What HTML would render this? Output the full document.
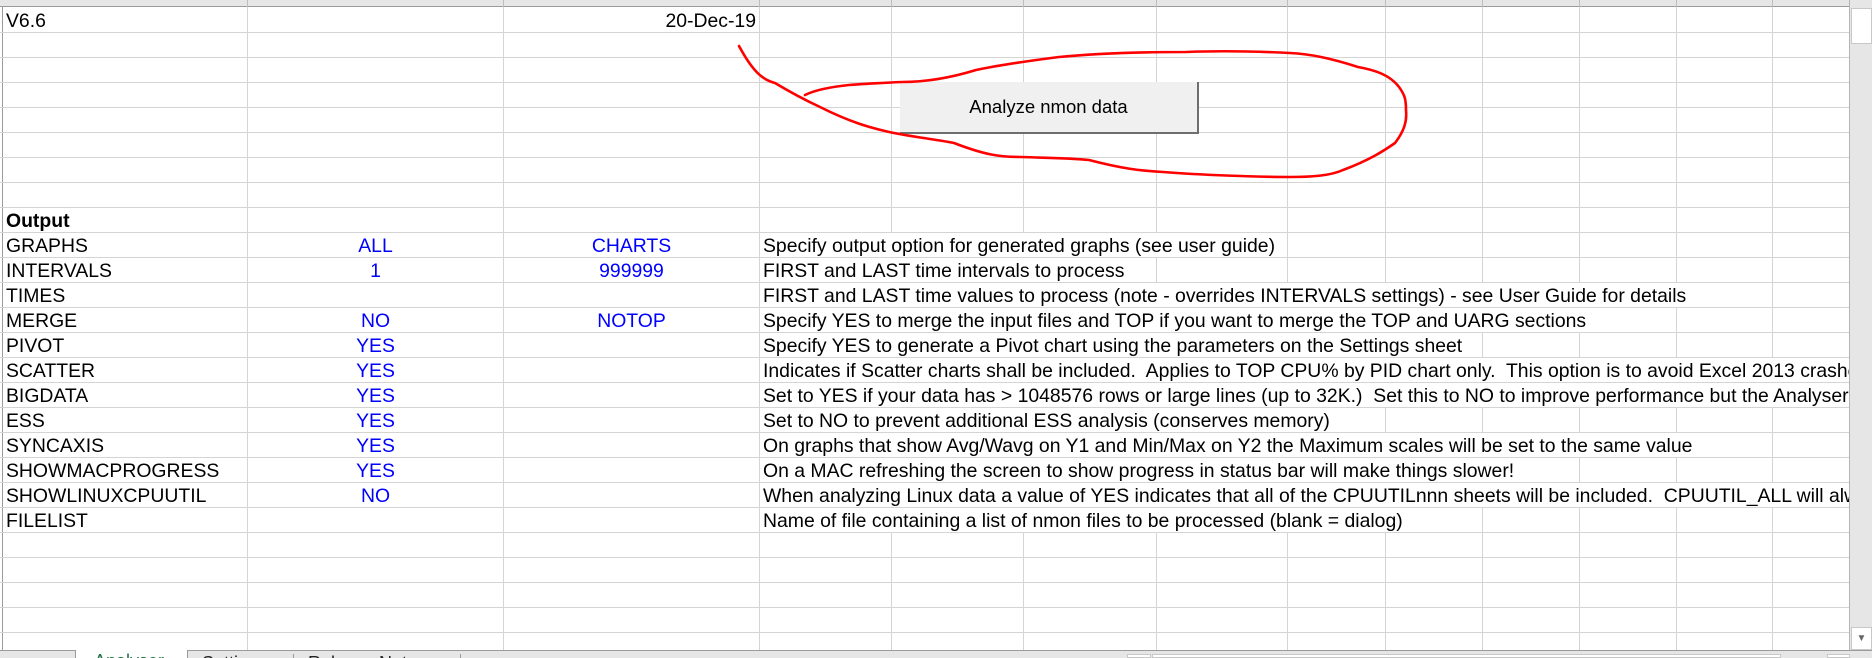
<!DOCTYPE html>
<html><head><meta charset="utf-8"><style>
*{margin:0;padding:0;box-sizing:border-box}
body{width:1872px;height:658px;overflow:hidden;background:#fff;position:relative;font-family:"Liberation Sans",Arial,sans-serif;font-size:19.4px;color:#000}
.hdr{position:absolute;left:0;top:0;width:1849px;height:7px;background:#e6e6e6;border-bottom:1px solid #9b9b9b}
.vl{position:absolute;width:1px;background:#d4d4d4;top:7px;height:643px}
.hl{position:absolute;height:1px;background:#d4d4d4;left:0;width:1849px}
.hs{position:absolute;top:0;width:1px;height:7px;background:#bdbdbd}
.t{position:absolute;height:24px;line-height:25px;padding-top:1px;white-space:nowrap}
.b{color:#0000ff;text-align:center}
.d{background:#fff;padding-right:4px}
.clip{position:absolute;left:0;top:0;width:1849px;height:650px;overflow:hidden}
</style></head><body>
<div class="clip">
<div class="hdr"></div>
<div class="vl" style="left:2px;background:#9b9b9b"></div>
<div class="vl" style="left:247px"></div><div class="vl" style="left:503px"></div><div class="vl" style="left:759px"></div><div class="vl" style="left:891px"></div><div class="vl" style="left:1023px"></div><div class="vl" style="left:1156px"></div><div class="vl" style="left:1287px"></div><div class="vl" style="left:1385px"></div><div class="vl" style="left:1482px"></div><div class="vl" style="left:1579px"></div><div class="vl" style="left:1676px"></div><div class="vl" style="left:1772px"></div>
<div class="hs" style="left:247px"></div><div class="hs" style="left:503px"></div><div class="hs" style="left:759px"></div><div class="hs" style="left:891px"></div><div class="hs" style="left:1023px"></div><div class="hs" style="left:1156px"></div><div class="hs" style="left:1287px"></div><div class="hs" style="left:1385px"></div><div class="hs" style="left:1482px"></div><div class="hs" style="left:1579px"></div><div class="hs" style="left:1676px"></div><div class="hs" style="left:1772px"></div>
<div class="hl" style="top:32px"></div><div class="hl" style="top:57px"></div><div class="hl" style="top:82px"></div><div class="hl" style="top:107px"></div><div class="hl" style="top:132px"></div><div class="hl" style="top:157px"></div><div class="hl" style="top:182px"></div><div class="hl" style="top:207px"></div><div class="hl" style="top:232px"></div><div class="hl" style="top:257px"></div><div class="hl" style="top:282px"></div><div class="hl" style="top:307px"></div><div class="hl" style="top:332px"></div><div class="hl" style="top:357px"></div><div class="hl" style="top:382px"></div><div class="hl" style="top:407px"></div><div class="hl" style="top:432px"></div><div class="hl" style="top:457px"></div><div class="hl" style="top:482px"></div><div class="hl" style="top:507px"></div><div class="hl" style="top:532px"></div><div class="hl" style="top:557px"></div><div class="hl" style="top:582px"></div><div class="hl" style="top:607px"></div><div class="hl" style="top:632px"></div>

<div class="t" style="left:6px;top:8px">V6.6</div>
<div class="t" style="left:504px;top:8px;width:252px;text-align:right">20-Dec-19</div>

<div class="t" style="left:6px;top:208px;font-weight:bold">Output</div>

<div class="t" style="left:6px;top:233px">GRAPHS</div><div class="t b" style="left:248px;top:233px;width:255px">ALL</div><div class="t b" style="left:504px;top:233px;width:255px">CHARTS</div><div class="t d" style="left:763px;top:233px">Specify output option for generated graphs (see user guide)</div>
<div class="t" style="left:6px;top:258px">INTERVALS</div><div class="t b" style="left:248px;top:258px;width:255px">1</div><div class="t b" style="left:504px;top:258px;width:255px">999999</div><div class="t d" style="left:763px;top:258px">FIRST and LAST time intervals to process</div>
<div class="t" style="left:6px;top:283px">TIMES</div><div class="t d" style="left:763px;top:283px">FIRST and LAST time values to process (note - overrides INTERVALS settings) - see User Guide for details</div>
<div class="t" style="left:6px;top:308px">MERGE</div><div class="t b" style="left:248px;top:308px;width:255px">NO</div><div class="t b" style="left:504px;top:308px;width:255px">NOTOP</div><div class="t d" style="left:763px;top:308px">Specify YES to merge the input files and TOP if you want to merge the TOP and UARG sections</div>
<div class="t" style="left:6px;top:333px">PIVOT</div><div class="t b" style="left:248px;top:333px;width:255px">YES</div><div class="t d" style="left:763px;top:333px">Specify YES to generate a Pivot chart using the parameters on the Settings sheet</div>
<div class="t" style="left:6px;top:358px">SCATTER</div><div class="t b" style="left:248px;top:358px;width:255px">YES</div><div class="t d" style="left:763px;top:358px">Indicates if Scatter charts shall be included.&nbsp; Applies to TOP CPU% by PID chart only.&nbsp; This option is to avoid Excel 2013 crashes</div>
<div class="t" style="left:6px;top:383px">BIGDATA</div><div class="t b" style="left:248px;top:383px;width:255px">YES</div><div class="t d" style="left:763px;top:383px">Set to YES if your data has &gt; 1048576 rows or large lines (up to 32K.)&nbsp; Set this to NO to improve performance but the Analyser may fail</div>
<div class="t" style="left:6px;top:408px">ESS</div><div class="t b" style="left:248px;top:408px;width:255px">YES</div><div class="t d" style="left:763px;top:408px">Set to NO to prevent additional ESS analysis (conserves memory)</div>
<div class="t" style="left:6px;top:433px">SYNCAXIS</div><div class="t b" style="left:248px;top:433px;width:255px">YES</div><div class="t d" style="left:763px;top:433px">On graphs that show Avg/Wavg on Y1 and Min/Max on Y2 the Maximum scales will be set to the same value</div>
<div class="t" style="left:6px;top:458px">SHOWMACPROGRESS</div><div class="t b" style="left:248px;top:458px;width:255px">YES</div><div class="t d" style="left:763px;top:458px">On a MAC refreshing the screen to show progress in status bar will make things slower!</div>
<div class="t" style="left:6px;top:483px">SHOWLINUXCPUUTIL</div><div class="t b" style="left:248px;top:483px;width:255px">NO</div><div class="t d" style="left:763px;top:483px">When analyzing Linux data a value of YES indicates that all of the CPUUTILnnn sheets will be included.&nbsp; CPUUTIL_ALL will always be included</div>
<div class="t" style="left:6px;top:508px">FILELIST</div><div class="t d" style="left:763px;top:508px">Name of file containing a list of nmon files to be processed (blank = dialog)</div>

<div style="position:absolute;left:900px;top:82px;width:299px;height:52px;background:#f0f0f0;border-right:2px solid #6e6e6e;border-bottom:2px solid #6e6e6e;text-align:center;line-height:50px;font-size:18.5px">Analyze nmon data</div>

<svg style="position:absolute;left:0;top:0" width="1849" height="650"><path d="M739,46 C752,70 762,80 775,83 C790,92 805,100 820,107 C850,122 870,128 894,133 C920,138 940,140 954,143 C985,155 1000,157 1021,157 C1050,158 1070,158 1089,160 C1120,168 1140,171 1163,172 C1200,175 1260,177 1290,177 C1310,177 1330,176 1343,170 C1370,160 1385,150 1395,143 C1405,130 1407,120 1406,110 C1406,100 1405,95 1399,87 C1390,75 1375,70 1358,67 C1330,58 1310,54 1290,53 C1250,51 1210,51 1186,52 C1130,52 1090,54 1059,57 C1020,62 995,66 976,70 C950,78 925,82 902,82 C880,83 862,84 849,85 C830,87 815,90 805,95" fill="none" stroke="#f00" stroke-width="2.6" stroke-linecap="round"/></svg>
</div>

<div style="position:absolute;left:1849px;top:0;width:23px;height:650px;background:#e6e6e6;border-left:1px solid #b5b5b5"></div>
<div style="position:absolute;left:1851px;top:8px;width:21px;height:36px;background:#fff;border:1px solid #c8c8c8"></div>
<div style="position:absolute;left:1851px;top:627px;width:21px;height:23px;background:#fff;border:1px solid #c8c8c8;font-size:10px;color:#666;text-align:center;line-height:22px">▼</div>

<div style="position:absolute;left:0;top:650px;width:1872px;height:8px;background:#e6e6e6;border-top:1px solid #9b9b9b"></div>
<div style="position:absolute;left:0;top:650px;width:76px;height:8px;border-right:1px solid #9b9b9b"></div>
<div style="position:absolute;left:76px;top:649px;width:111px;height:9px;background:#fff;overflow:hidden"><div style="position:absolute;left:18px;top:2px;color:#217346;font-size:18px;line-height:20px">Analyser</div></div>
<div style="position:absolute;left:187px;top:650px;width:1px;height:8px;background:#9b9b9b"></div>
<div style="position:absolute;left:188px;top:651px;width:300px;height:7px;overflow:hidden;font-size:18px;color:#222"><span style="position:absolute;left:14px;top:2px;line-height:20px">Settings</span><span style="position:absolute;left:120px;top:2px;line-height:20px">Release Notes</span></div>
<div style="position:absolute;left:293px;top:654px;width:1px;height:4px;background:#9b9b9b"></div>
<div style="position:absolute;left:460px;top:654px;width:1px;height:4px;background:#9b9b9b"></div>
<div style="position:absolute;left:1127px;top:654px;width:24px;height:4px;background:#fff;border:1px solid #c8c8c8"></div>
<div style="position:absolute;left:1152px;top:654px;width:629px;height:4px;background:#fff;border:1px solid #c8c8c8"></div>
<div style="position:absolute;left:1827px;top:654px;width:23px;height:4px;background:#fff;border:1px solid #c8c8c8"></div>
</body></html>
